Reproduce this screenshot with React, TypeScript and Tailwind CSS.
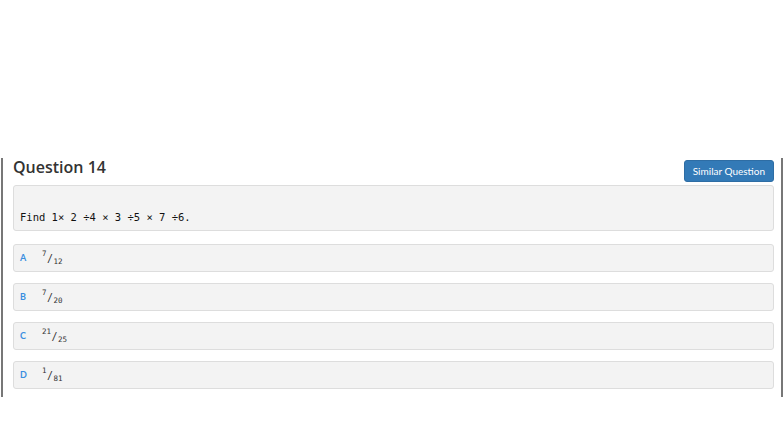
import React from 'react';

type Option = { letter: string; num: string; den: string };

const options: Option[] = [
    { letter: 'A', num: '7', den: '12' },
    { letter: 'B', num: '7', den: '20' },
    { letter: 'C', num: '21', den: '25' },
    { letter: 'D', num: '1', den: '81' },
];

const Fraction: React.FC<{ num: string; den: string }> = ({ num, den }) => (
    <span className="inline-flex items-center font-['DejaVu_Sans_Mono',monospace] text-[#333]">
        <span className="text-[7.5px] relative -top-[4px]">{num}</span>
        <span className="text-[10px] mx-[0.5px]">/</span>
        <span className="text-[7.5px] relative top-[4px]">{den}</span>
    </span>
);

const App: React.FC = () => {
    return (
        <div className="w-[784px] h-[441px] bg-white font-['Lato',sans-serif]">
            <div className="pt-[158px]">
                <div className="mx-[1px] border-x-2 border-[#777] pl-[10px] pr-[7px] pb-[8px]">
                    {/* Header */}
                    <div className="flex justify-between items-start h-[27px]">
                        <h2 className="font-['Open_Sans',sans-serif] text-[16px] leading-[19px] font-semibold text-[#333]">Question 14</h2>
                        <button className="mt-[2px] h-[22px] px-[8px] bg-[#337ab7] border border-[#2e6da4] rounded-[3px] text-white text-[10px] leading-[20px]">
                            Similar Question
                        </button>
                    </div>

                    {/* Question */}
                    <div className="bg-[#f3f3f3] border border-[#ddd] rounded-[3px] pl-[6px] pt-[24px] pb-[6px]">
                        <p className="font-['DejaVu_Sans_Mono',monospace] text-[10.5px] leading-[14px] text-[#111]">
                            Find 1× 2 ÷4 × 3 ÷5 × 7 ÷6.
                        </p>
                    </div>

                    {/* Options */}
                    <div className="flex flex-col gap-[11px] mt-[13px]">
                        {options.map(o => (
                            <div key={o.letter} className="flex items-center h-[28px] bg-[#f3f3f3] border border-[#ddd] rounded-[3px] pl-[6px]">
                                <span className="w-[22px] text-[9px] font-bold text-[#3a8ee0]">{o.letter}</span>
                                <Fraction num={o.num} den={o.den} />
                            </div>
                        ))}
                    </div>
                </div>
            </div>
        </div>
    );
};

export default App;
